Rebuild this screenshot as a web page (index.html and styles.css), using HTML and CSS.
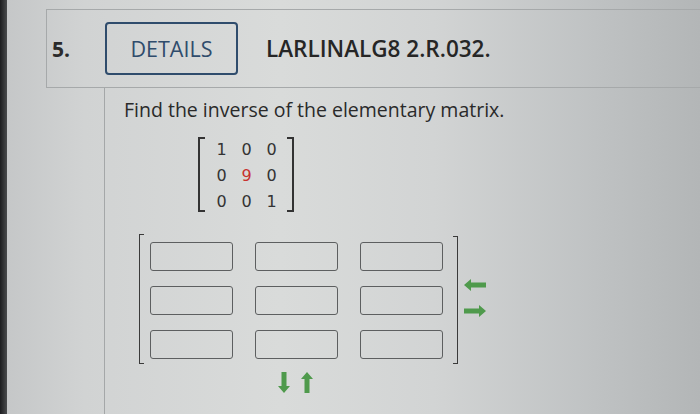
FILE: index.html
```html
<!DOCTYPE html>
<html>
<head>
<meta charset="utf-8">
<link rel="stylesheet" href="styles.css">
</head>
<body>
<div class="screen">
  <div class="bezel"></div>
  <div class="main">
    <div class="header">
      <div class="num">5.</div>
      <div class="details">DETAILS</div>
      <div class="title">LARLINALG8 2.R.032.</div>
    </div>
    <div class="content">
      <p class="question">Find the inverse of the elementary matrix.</p>
      <div class="given">
        <div class="br br-l"></div>
        <div class="entries">
          <span>1</span><span>0</span><span>0</span>
          <span>0</span><span class="red">9</span><span>0</span>
          <span>0</span><span>0</span><span>1</span>
        </div>
        <div class="br br-r"></div>
      </div>
      <div class="answer">
        <div class="abr abr-l"></div>
        <div class="inputs">
          <div class="box"></div><div class="box"></div><div class="box"></div>
          <div class="box"></div><div class="box"></div><div class="box"></div>
          <div class="box"></div><div class="box"></div><div class="box"></div>
        </div>
        <div class="abr abr-r"></div>
        <div class="hctl">
          <svg width="22" height="12" viewBox="0 0 22 12"><polygon points="0,6 7,0 7,3.5 22,3.5 22,8.5 7,8.5 7,12" fill="#4f9a4c"/></svg>
          <svg width="22" height="12" viewBox="0 0 22 12"><polygon points="22,6 15,0 15,3.5 0,3.5 0,8.5 15,8.5 15,12" fill="#4f9a4c"/></svg>
        </div>
      </div>
      <div class="vctl">
        <svg width="12" height="21" viewBox="0 0 12 21"><polygon points="6,21 0,14 3.5,14 3.5,0 8.5,0 8.5,14 12,14" fill="#4f9a4c"/></svg>
        <svg width="12" height="21" viewBox="0 0 12 21"><polygon points="6,0 0,7 3.5,7 3.5,21 8.5,21 8.5,7 12,7" fill="#4f9a4c"/></svg>
      </div>
    </div>
  </div>
</div>
</body>
</html>
```

FILE: styles.css
```css
html, body {
  margin: 0;
  padding: 0;
}
.screen {
  width: 700px;
  height: 414px;
  display: flex;
  overflow: hidden;
  background: linear-gradient(90deg, #c4c6c7 0%, #d1d3d3 12%, #d9dbda 40%, #d2d4d4 62%, #bfc2c3 85%, #b3b6b7 100%);
  font-family: "Open Sans", "DejaVu Sans", sans-serif;
  color: #2a2a2a;
}
.bezel {
  width: 7px;
  flex: none;
  background: linear-gradient(90deg, #1c1d1f, #4a4c4e);
}
.main {
  flex: 1;
  padding: 9px 0 0 39px;
  display: flex;
  flex-direction: column;
}
.header {
  height: 79px;
  box-sizing: border-box;
  border: 1px solid #a6a9aa;
  border-right: none;
  display: flex;
  align-items: center;
}
.num {
  width: 53px;
  padding-left: 5px;
  box-sizing: border-box;
  margin-right: 5px;
  font-weight: 700;
  font-size: 21px;
  color: #2b2b2b;
}
.details {
  width: 133px;
  height: 53px;
  box-sizing: border-box;
  border: 2px solid #2f4c6c;
  border-radius: 4px;
  color: #2f4c6c;
  font-size: 21.5px;
  display: flex;
  align-items: center;
  justify-content: center;
}
.title {
  margin-left: 28px;
  font-weight: 600;
  font-size: 22.5px;
  color: #262626;
}
.content {
  flex: 1;
  margin-left: 58px;
  border-left: 1px solid #a4a7a8;
  padding-left: 19px;
  display: flex;
  flex-direction: column;
}
.question {
  margin: 9px 0 0 0;
  font-size: 19.5px;
  line-height: 26px;
  color: #2a2a2a;
}
.given {
  display: flex;
  margin: 14px 0 0 74px;
  height: 75px;
}
.br {
  width: 5px;
  border: 2px solid #333;
}
.br-l { border-right: none; }
.br-r { border-left: none; }
.entries {
  display: grid;
  grid-template-columns: repeat(3, 25px);
  grid-auto-rows: 26px;
  padding: 0 3px 0 4px;
  font-family: "DejaVu Sans", sans-serif;
  font-size: 16px;
  color: #333;
  align-items: center;
  justify-items: center;
  margin-top: -1px;
}
.red { color: #c8322f; }
.answer {
  display: flex;
  align-items: stretch;
  margin: 22px 0 0 15px;
  height: 130px;
}
.abr {
  width: 4px;
  border: 1.5px solid #3a3a3a;
}
.abr-l { border-right: none; }
.abr-r { border-left: none; margin-top: 2px; }
.inputs {
  display: grid;
  grid-template-columns: repeat(3, 83px);
  grid-auto-rows: 29px;
  column-gap: 22px;
  row-gap: 15px;
  padding: 8px 10px 0 6px;
}
.box {
  box-sizing: border-box;
  border: 1.5px solid #5d5f60;
  border-radius: 3px;
  background: transparent;
}
.hctl {
  display: flex;
  flex-direction: column;
  gap: 14px;
  margin: 45px 0 0 6px;
}
.vctl {
  display: flex;
  gap: 11px;
  margin: 8px 0 0 154px;
}
```
